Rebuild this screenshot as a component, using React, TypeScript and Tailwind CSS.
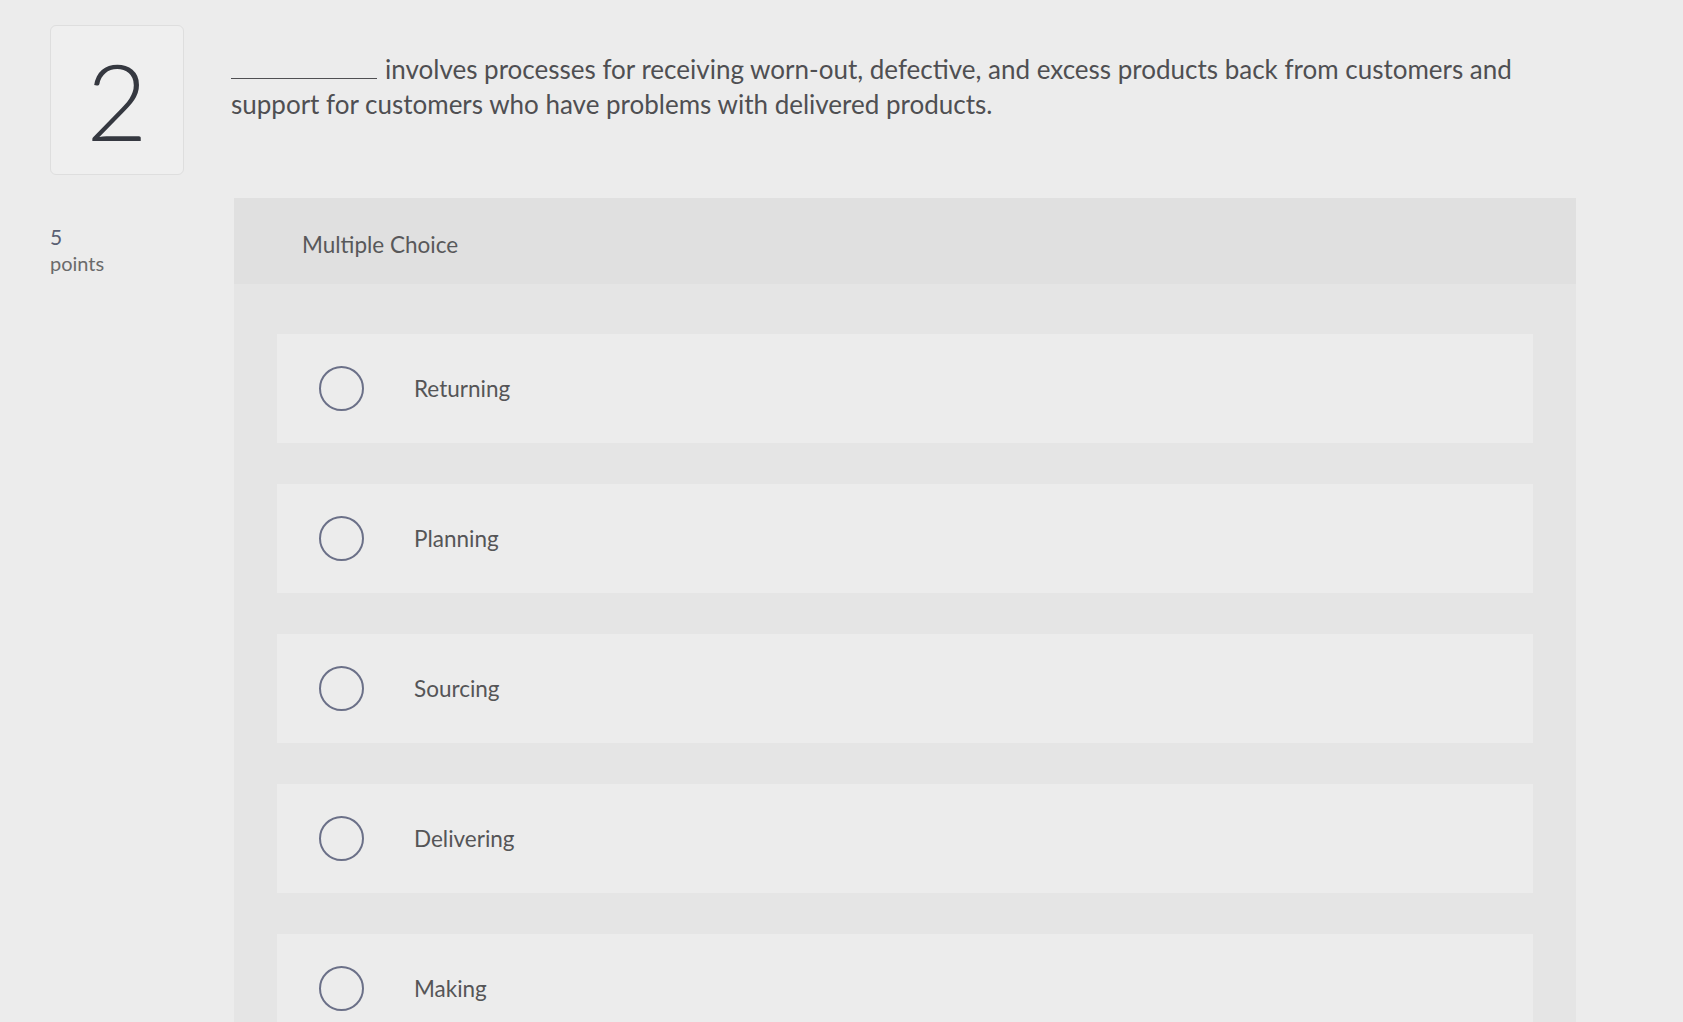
import React from 'react';

const options = ['Returning', 'Planning', 'Sourcing', 'Delivering', 'Making'];

export default function App() {
    return (
        <div
            className="h-screen w-full overflow-hidden bg-[#ececec] text-[#4d4d4f]"
            style={{ fontFamily: 'Lato, "Open Sans", sans-serif' }}
        >
            <div className="flex pl-[50px] pt-[25px]">
                {/* Left column: question number and points */}
                <div className="w-[181px] shrink-0">
                    <div className="flex h-[150px] w-[134px] items-center justify-center rounded-md border border-[#dedede] bg-[#efefef]">
                        <span className="text-[106px] font-light leading-none text-[#353840]">2</span>
                    </div>
                    <div className="mt-[48px] text-[21px] leading-[28px] text-[#5a5f73]">5</div>
                    <div className="text-[20px] leading-[24px] text-[#6a6a6a]">points</div>
                </div>

                {/* Right column: question + choices */}
                <div className="flex-1">
                    <p className="w-[1320px] pt-[27px] text-[26px] leading-[35px] text-[#4f4f52]">
                        <span className="mr-[8px] inline-block w-[146px] border-b-[1.5px] border-[#4f4f52] align-baseline"></span>
                        involves processes for receiving worn-out, defective, and excess products back from customers and support for customers who have problems with delivered products.
                    </p>

                    <div className="mt-[76px] ml-[3px] w-[1342px] bg-[#e5e5e5]">
                        <div className="flex h-[86px] items-center bg-[#e0e0e0] pl-[68px] pt-[8px] text-[22.5px] text-[#58585a]">
                            Multiple Choice
                        </div>
                        <div className="flex flex-col gap-[41px] px-[43px] pt-[50px] pb-[40px]">
                            {options.map((label) => (
                                <div
                                    key={label}
                                    className="flex h-[109px] items-center bg-[#ececec] pl-[42px]"
                                >
                                    <span className="h-[45px] w-[45px] shrink-0 rounded-full border-2 border-[#6b7088]"></span>
                                    <span className="ml-[50px] text-[22.5px] text-[#555557]">{label}</span>
                                </div>
                            ))}
                        </div>
                    </div>
                </div>
            </div>
        </div>
    );
}
